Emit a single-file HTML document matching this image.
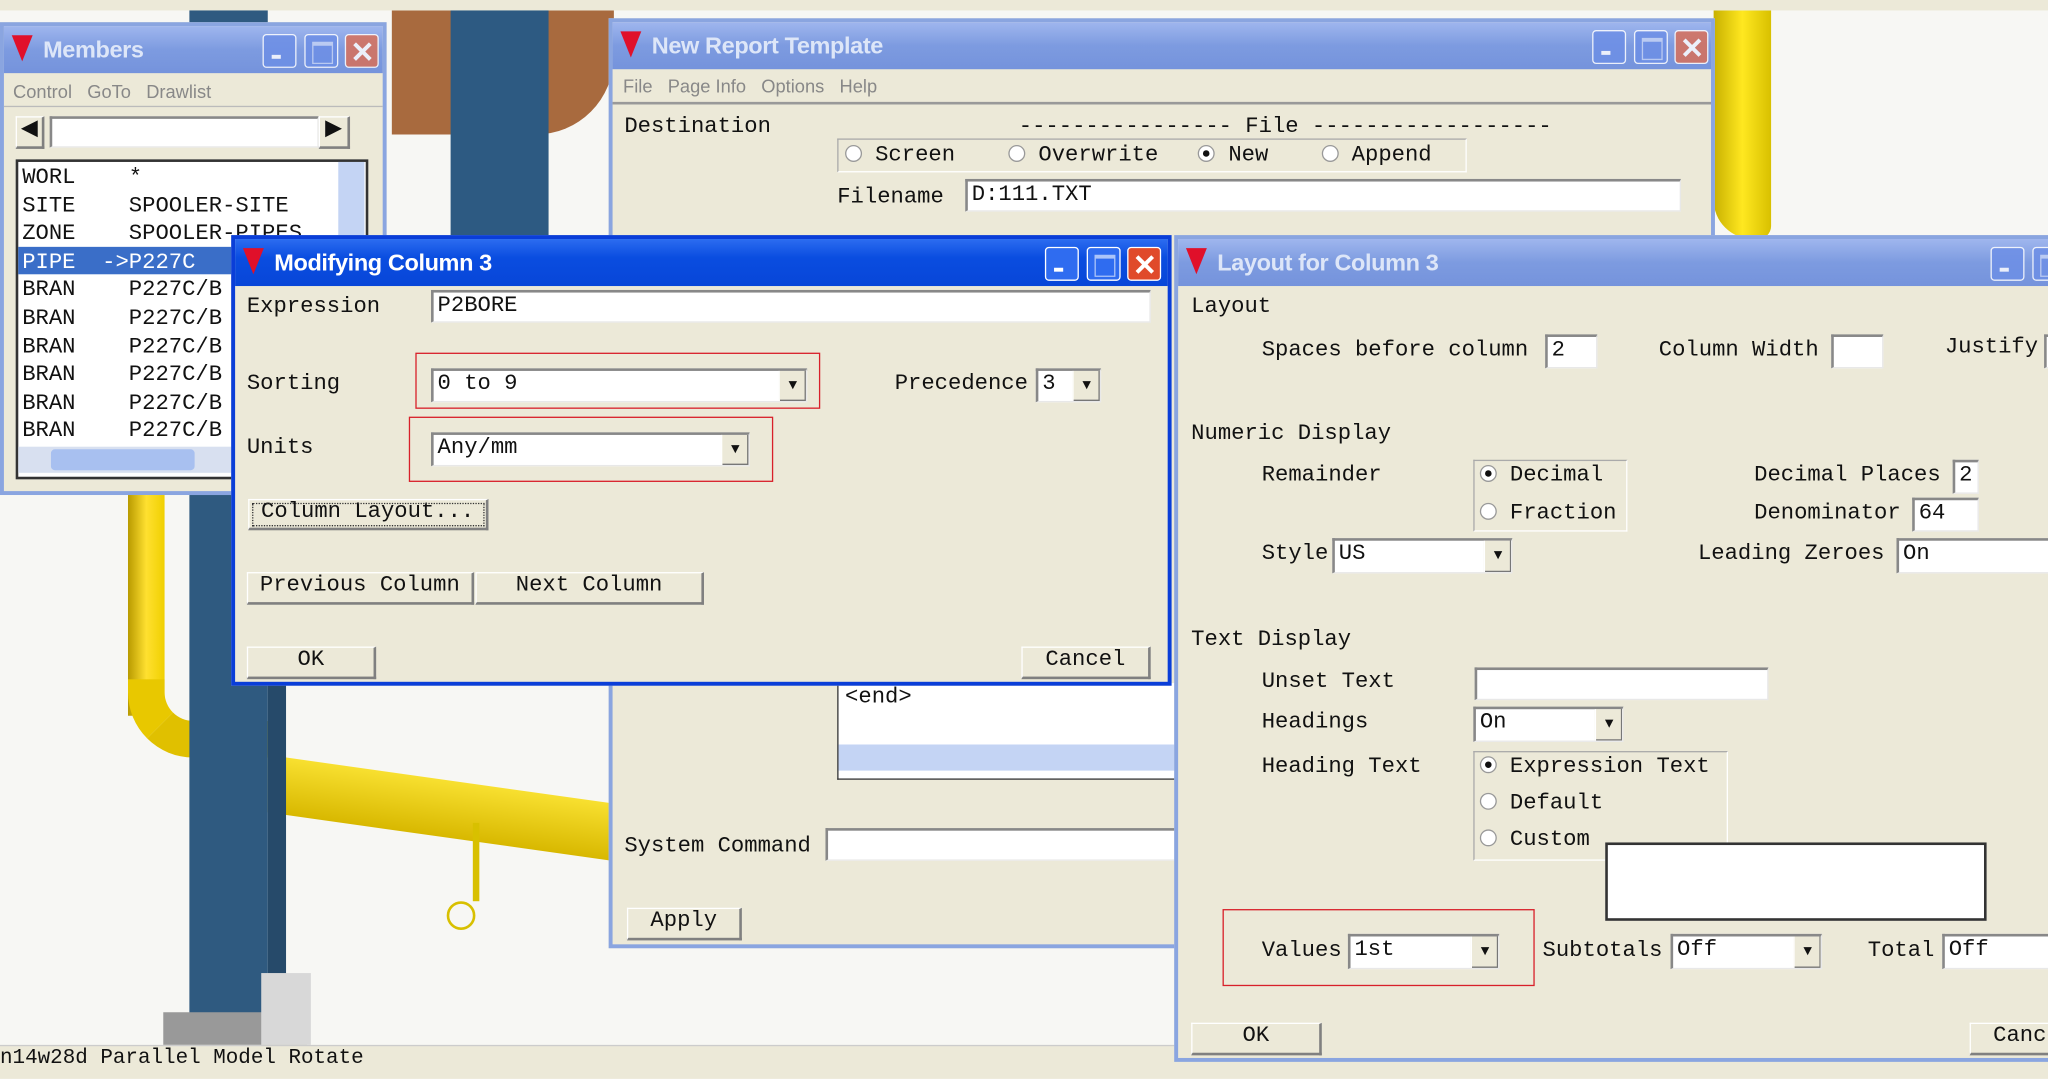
<!DOCTYPE html>
<html><head><meta charset="utf-8"><style>
*{box-sizing:border-box;margin:0;padding:0}
body{width:2048px;height:1078px;overflow:hidden;background:#f6f6f2}
#s{position:absolute;left:0;top:0;width:1568px;height:826px;transform:scale(1.30612);transform-origin:0 0;background:#f7f7f4;font-family:"Liberation Mono",monospace;font-size:17px;color:#111}
.a{position:absolute}
.t{position:absolute;line-height:20px;white-space:pre}
.win{position:absolute;background:#ece9d8;border:3px solid #8aa5e0}
.win.act{border-color:#0a3ed8}
.tb{position:absolute;left:0;right:0;top:0;height:36px;background:linear-gradient(#9fb6ee,#7d9be0 50%,#7593dc);}
.act .tb{background:linear-gradient(#2c6cf0,#0a4de0 40%,#0846d8)}
.tt{position:absolute;top:8px;left:30px;font:bold 18px "Liberation Sans",sans-serif;color:#dde6f8;letter-spacing:-0.3px}
.act .tt{color:#fff}
.tri{position:absolute;left:6px;top:7px;width:0;height:0;border-left:8px solid transparent;border-right:8px solid transparent;border-top:20px solid #e0102a}
.bt{position:absolute;top:6px;width:26px;height:26px;border:1px solid #fff;border-radius:3px;background:#6d8fe6;opacity:.85}
.act .bt{background:#2f6cf0;opacity:1}
.bt.x{background:#d8705a}
.act .bt.x{background:#e04a2a}
.bt.mi::after{content:"";position:absolute;left:6px;top:15px;width:7px;height:3px;background:#fff}
.bt.ma::after{content:"";position:absolute;left:5px;top:5px;width:14px;height:13px;border:1px solid #fff;border-top-width:3px;opacity:.6}
.bt.x::before,.bt.x::after{content:"";position:absolute;left:11px;top:4px;width:3px;height:17px;background:#fff;transform:rotate(45deg)}
.bt.x::after{transform:rotate(-45deg)}
.in{position:absolute;background:#fff;border-top:2px solid #888;border-left:2px solid #888;border-right:1px solid #e8e8e8;border-bottom:1px solid #e8e8e8;line-height:22px;padding-left:3px;white-space:pre}
.dd::after{content:"▼";position:absolute;right:0;top:0;bottom:0;width:20px;background:#ece9d8;border-left:1px solid #fff;box-shadow:inset -1px -1px #777;font-size:11px;text-align:center;line-height:24px}
.btn{position:absolute;background:#ece9d8;border:1px solid #fff;border-right:2px solid #808080;border-bottom:2px solid #808080;text-align:center;line-height:20px;white-space:pre}
.red{position:absolute;border:1.5px solid #d8202a}
.grp{position:absolute;border:1px solid #aaa;border-right-color:#fff;border-bottom-color:#fff}
.r{display:inline-block;width:13px;height:13px;border-radius:50%;background:#fff;border:1px solid #999;vertical-align:-1px;margin-right:10px;position:relative}
.r.on::after{content:"";position:absolute;left:3px;top:3px;width:5px;height:5px;border-radius:50%;background:#111}
.mn{position:absolute;font:14px "Liberation Sans",sans-serif;color:#888}
</style></head><body><div id="s">
<div class="a" style="left:0;top:0;width:1568px;height:8px;background:#ece9d8"></div>
<div class="a" style="left:300px;top:8px;width:170px;height:95px;background:#a86a3e;border-radius:0 0 60px 0"></div>
<div class="a" style="left:345px;top:8px;width:75px;height:175px;background:#2d5a82"></div>
<div class="a" style="left:1312px;top:8px;width:44px;height:175px;background:linear-gradient(90deg,#c8b000,#ffe820,#d8c000);border-radius:0 0 10px 30px"></div>
<div class="a" style="left:98px;top:378px;width:28px;height:170px;background:linear-gradient(90deg,#b89a00,#ffe030,#f0d000)"></div>
<div class="a" style="left:98px;top:520px;width:120px;height:60px;border-left:28px solid #e8c800;border-bottom:28px solid #e0c000;border-radius:0 0 0 50px"></div>
<div class="a" style="left:205px;top:578px;width:262px;height:44px;background:linear-gradient(#f8e030,#d8b800);transform:skewY(8deg);transform-origin:0 0"></div>
<div class="a" style="left:145px;top:8px;width:60px;height:782px;background:#2f5a80"></div>
<div class="a" style="left:205px;top:150px;width:14px;height:605px;background:#264a6a"></div>
<div class="a" style="left:125px;top:775px;width:110px;height:25px;background:#999"></div>
<div class="a" style="left:200px;top:745px;width:38px;height:55px;background:#d8d8d8"></div>
<div class="a" style="left:362px;top:630px;width:5px;height:60px;background:#d8c000"></div>
<div class="a" style="left:342px;top:690px;width:22px;height:22px;border:2px solid #d8c000;border-radius:50%"></div>
<div class="a" style="left:0;top:800px;width:1568px;height:26px;background:#ece9d8;border-top:1px solid #ccc"></div>
<div class="t" style="left:0;top:800px;font-size:16px">n14w28d Parallel Model Rotate</div>

<div class="win" style="left:0;top:17px;width:296px;height:362px">
<div class="tb"></div><div class="tri"></div><div class="tt">Members</div>
<div class="bt mi" style="left:198px"></div><div class="bt ma" style="left:230px"></div><div class="bt x" style="left:261px"></div>
<div class="mn" style="left:7px;top:42px">Control&nbsp;&nbsp;&nbsp;GoTo&nbsp;&nbsp;&nbsp;Drawlist</div>
<div class="a" style="left:0;right:0;top:61px;height:1px;background:#bbb"></div>
<div class="btn" style="left:9px;top:69px;width:22px;height:25px">◀</div>
<div class="in" style="left:35px;top:69px;width:206px;height:24px"></div>
<div class="btn" style="left:241px;top:69px;width:24px;height:25px">▶</div>
<div class="a" style="left:9px;top:102px;width:270px;height:245px;background:#fff;border:2px solid #333"></div>
<div class="a" style="left:11px;top:169px;width:245px;height:21px;background:#3a6ec8"></div>
<div class="a" style="left:256px;top:104px;width:20px;height:218px;background:#c4d4f4"></div>
<div class="a" style="left:11px;top:322px;width:265px;height:20px;background:#d8e0f0"></div>
<div class="a" style="left:36px;top:324px;width:110px;height:16px;background:#a8c0f0;border-radius:3px"></div>
<div class="t" style="left:14px;top:106px;line-height:21.6px">WORL    *
SITE    SPOOLER-SITE
ZONE    SPOOLER-PIPES
<span style="color:#fff">PIPE  ->P227C</span>
BRAN    P227C/B
BRAN    P227C/B
BRAN    P227C/B
BRAN    P227C/B
BRAN    P227C/B
BRAN    P227C/B</div>
</div>

<div class="win" style="left:466px;top:14px;width:847px;height:712px">
<div class="tb"></div><div class="tri"></div><div class="tt">New Report Template</div>
<div class="bt mi" style="left:750px"></div><div class="bt ma" style="left:782px"></div><div class="bt x" style="left:813px"></div>
<div class="mn" style="left:8px;top:41px">File&nbsp;&nbsp;&nbsp;Page Info&nbsp;&nbsp;&nbsp;Options&nbsp;&nbsp;&nbsp;Help</div>
<div class="a" style="left:0;right:0;top:61px;height:2px;background:#999"></div>
<div class="t" style="left:9px;top:71px">Destination</div>
<div class="t" style="left:311px;top:71px">---------------- File ------------------</div>
<div class="grp" style="left:172px;top:89px;width:482px;height:26px"></div>
<div class="t" style="left:178px;top:93px"><span class="r"></span>Screen    <span class="r"></span>Overwrite   <span class="r on"></span>New    <span class="r"></span>Append</div>
<div class="t" style="left:172px;top:125px">Filename</div>
<div class="in" style="left:270px;top:120px;width:548px;height:25px">D:111.TXT</div>
<div class="a" style="left:172px;top:506px;width:270px;height:74px;background:#fff;border:1px solid #333;border-top:none"></div>
<div class="t" style="left:178px;top:508px">&lt;end&gt;</div>
<div class="a" style="left:173px;top:553px;width:268px;height:20px;background:#c4d4f4"></div>
<div class="t" style="left:9px;top:622px">System Command</div>
<div class="in" style="left:163px;top:617px;width:290px;height:25px"></div>
<div class="btn" style="left:11px;top:678px;width:88px;height:25px">Apply</div>
</div>

<div class="win act" style="left:177px;top:180px;width:720px;height:345px;border-width:3px">
<div class="tb"></div><div class="tri"></div><div class="tt">Modifying Column 3</div>
<div class="bt mi" style="left:620px"></div><div class="bt ma" style="left:652px"></div><div class="bt x" style="left:683px"></div>
<div class="t" style="left:9px;top:43px">Expression</div>
<div class="in" style="left:150px;top:39px;width:551px;height:25px">P2BORE</div>
<div class="t" style="left:9px;top:102px">Sorting</div>
<div class="red" style="left:138px;top:87px;width:310px;height:43px"></div>
<div class="in dd" style="left:150px;top:99px;width:288px;height:26px">0 to 9</div>
<div class="t" style="left:505px;top:102px">Precedence</div>
<div class="in dd" style="left:613px;top:99px;width:50px;height:26px">3</div>
<div class="t" style="left:9px;top:151px">Units</div>
<div class="red" style="left:133px;top:136px;width:279px;height:50px"></div>
<div class="in dd" style="left:150px;top:148px;width:244px;height:26px">Any/mm</div>
<div class="btn" style="left:10px;top:199px;width:184px;height:24px;outline:1px dotted #333;outline-offset:-4px">Column Layout...</div>
<div class="btn" style="left:9px;top:255px;width:174px;height:25px">Previous Column</div>
<div class="btn" style="left:184px;top:255px;width:175px;height:25px">Next Column</div>
<div class="btn" style="left:9px;top:312px;width:99px;height:25px">OK</div>
<div class="btn" style="left:602px;top:312px;width:99px;height:25px">Cancel</div>
</div>

<div class="win" style="left:899px;top:180px;width:680px;height:633px">
<div class="tb"></div><div class="tri"></div><div class="tt">Layout for Column 3</div>
<div class="bt mi" style="left:622px"></div><div class="bt ma" style="left:654px"></div>
<div class="t" style="left:10px;top:43px">Layout</div>
<div class="t" style="left:64px;top:76px">Spaces before column</div>
<div class="in" style="left:281px;top:73px;width:40px;height:26px">2</div>
<div class="t" style="left:368px;top:76px">Column Width</div>
<div class="in" style="left:500px;top:73px;width:40px;height:26px"></div>
<div class="t" style="left:587px;top:74px">Justify</div>
<div class="in" style="left:663px;top:73px;width:40px;height:26px"></div>
<div class="t" style="left:10px;top:140px">Numeric Display</div>
<div class="t" style="left:64px;top:172px">Remainder</div>
<div class="grp" style="left:226px;top:169px;width:118px;height:55px"></div>
<div class="t" style="left:231px;top:172px"><span class="r on"></span>Decimal</div>
<div class="t" style="left:231px;top:201px"><span class="r"></span>Fraction</div>
<div class="t" style="left:441px;top:172px">Decimal Places</div>
<div class="in" style="left:593px;top:169px;width:20px;height:26px">2</div>
<div class="t" style="left:441px;top:201px">Denominator</div>
<div class="in" style="left:562px;top:198px;width:51px;height:26px">64</div>
<div class="t" style="left:64px;top:232px">Style</div>
<div class="in dd" style="left:118px;top:229px;width:138px;height:27px">US</div>
<div class="t" style="left:398px;top:232px">Leading Zeroes</div>
<div class="in" style="left:550px;top:229px;width:120px;height:27px">On</div>
<div class="t" style="left:10px;top:298px">Text Display</div>
<div class="t" style="left:64px;top:330px">Unset Text</div>
<div class="in" style="left:227px;top:328px;width:225px;height:25px"></div>
<div class="t" style="left:64px;top:361px">Headings</div>
<div class="in dd" style="left:226px;top:358px;width:115px;height:27px">On</div>
<div class="t" style="left:64px;top:395px">Heading Text</div>
<div class="grp" style="left:226px;top:392px;width:195px;height:84px"></div>
<div class="t" style="left:231px;top:395px"><span class="r on"></span>Expression Text</div>
<div class="t" style="left:231px;top:423px"><span class="r"></span>Default</div>
<div class="t" style="left:231px;top:451px"><span class="r"></span>Custom</div>
<div class="a" style="left:327px;top:462px;width:292px;height:60px;background:#fff;border:2px solid #333"></div>
<div class="red" style="left:34px;top:513px;width:239px;height:59px"></div>
<div class="t" style="left:64px;top:536px">Values</div>
<div class="in dd" style="left:130px;top:532px;width:116px;height:27px">1st</div>
<div class="t" style="left:279px;top:536px">Subtotals</div>
<div class="in dd" style="left:377px;top:532px;width:116px;height:27px">Off</div>
<div class="t" style="left:528px;top:536px">Total</div>
<div class="in" style="left:585px;top:532px;width:100px;height:27px">Off</div>
<div class="btn" style="left:10px;top:600px;width:100px;height:25px">OK</div>
<div class="btn" style="left:606px;top:600px;width:100px;height:25px;text-align:left;padding-left:17px">Cancel</div>
</div>
</div></body></html>
